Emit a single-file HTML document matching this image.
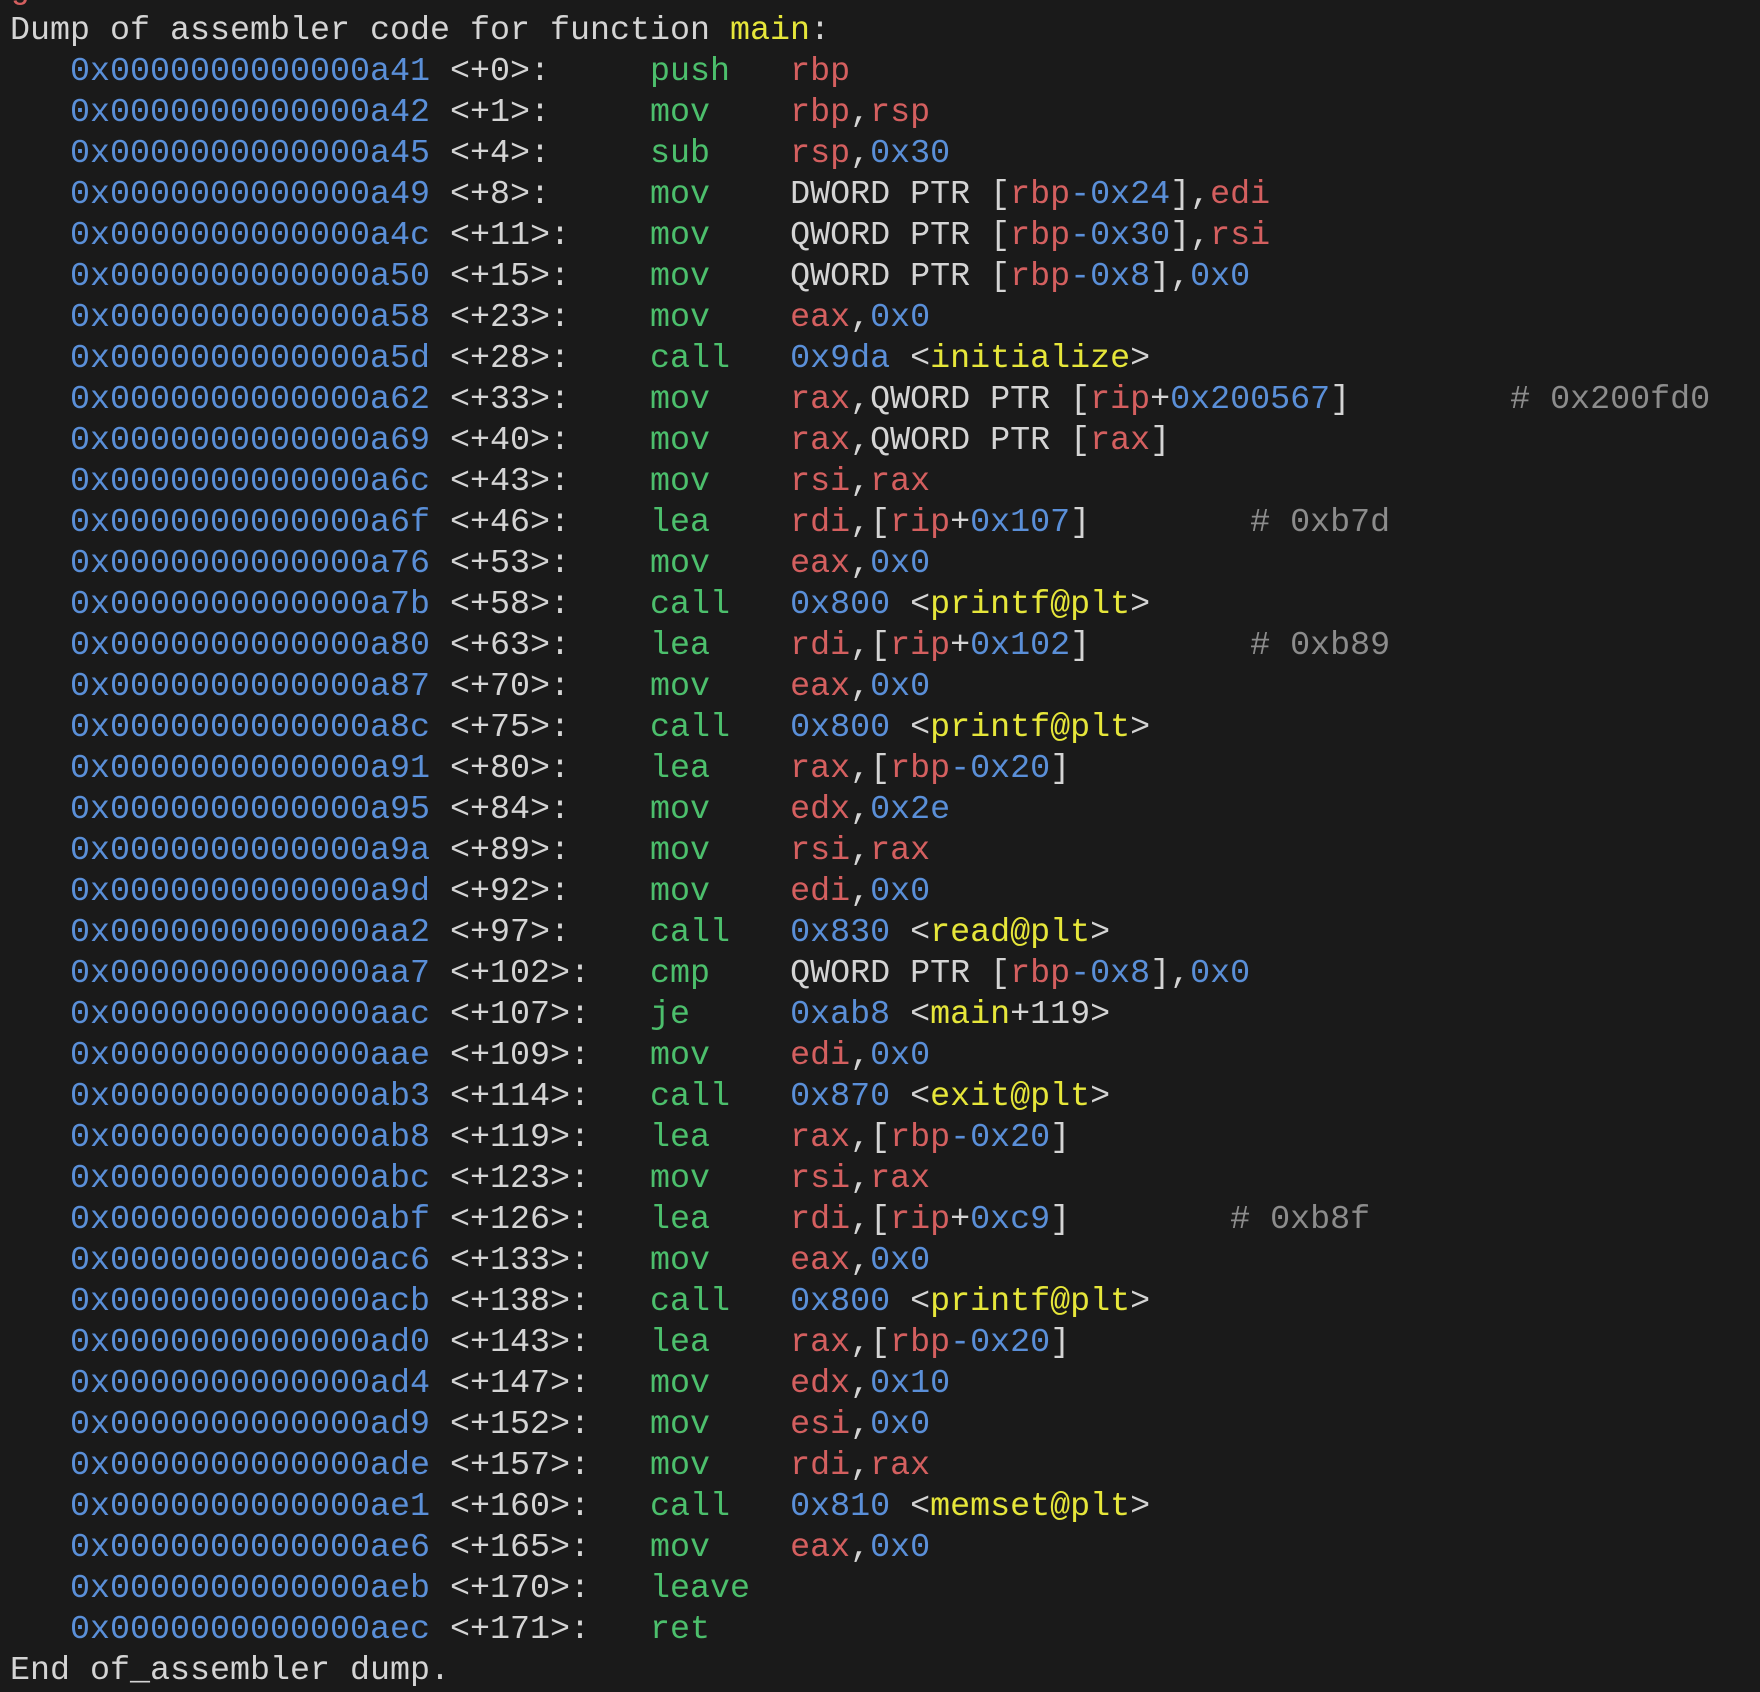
<!DOCTYPE html>
<html><head><meta charset="utf-8">
<style>
html,body{margin:0;padding:0;background:#1a1a1a;width:1760px;height:1692px;overflow:hidden}
pre{margin:0;position:absolute;left:10px;top:-30px;font-family:"Liberation Mono","DejaVu Sans Mono",monospace;font-size:33.33px;line-height:41px;color:#d4d4d4;white-space:pre}
.a{color:#5a8fd8}.g{color:#4cbf6c}.r{color:#d45f5f}.y{color:#e6e63a}.c{color:#8c8c8c}
</style></head><body>
<pre><span class="r">gef➤</span>  disass main
Dump of assembler code for function <span class="y">main</span>:
   <span class="a">0x0000000000000a41</span> &lt;+0&gt;:     <span class="g">push</span>   <span class="r">rbp</span>
   <span class="a">0x0000000000000a42</span> &lt;+1&gt;:     <span class="g">mov</span>    <span class="r">rbp</span>,<span class="r">rsp</span>
   <span class="a">0x0000000000000a45</span> &lt;+4&gt;:     <span class="g">sub</span>    <span class="r">rsp</span>,<span class="a">0x30</span>
   <span class="a">0x0000000000000a49</span> &lt;+8&gt;:     <span class="g">mov</span>    DWORD PTR [<span class="r">rbp</span><span class="a">-0x24</span>],<span class="r">edi</span>
   <span class="a">0x0000000000000a4c</span> &lt;+11&gt;:    <span class="g">mov</span>    QWORD PTR [<span class="r">rbp</span><span class="a">-0x30</span>],<span class="r">rsi</span>
   <span class="a">0x0000000000000a50</span> &lt;+15&gt;:    <span class="g">mov</span>    QWORD PTR [<span class="r">rbp</span><span class="a">-0x8</span>],<span class="a">0x0</span>
   <span class="a">0x0000000000000a58</span> &lt;+23&gt;:    <span class="g">mov</span>    <span class="r">eax</span>,<span class="a">0x0</span>
   <span class="a">0x0000000000000a5d</span> &lt;+28&gt;:    <span class="g">call</span>   <span class="a">0x9da</span> &lt;<span class="y">initialize</span>&gt;
   <span class="a">0x0000000000000a62</span> &lt;+33&gt;:    <span class="g">mov</span>    <span class="r">rax</span>,QWORD PTR [<span class="r">rip</span>+<span class="a">0x200567</span>]        <span class="c"># 0x200fd0</span>
   <span class="a">0x0000000000000a69</span> &lt;+40&gt;:    <span class="g">mov</span>    <span class="r">rax</span>,QWORD PTR [<span class="r">rax</span>]
   <span class="a">0x0000000000000a6c</span> &lt;+43&gt;:    <span class="g">mov</span>    <span class="r">rsi</span>,<span class="r">rax</span>
   <span class="a">0x0000000000000a6f</span> &lt;+46&gt;:    <span class="g">lea</span>    <span class="r">rdi</span>,[<span class="r">rip</span>+<span class="a">0x107</span>]        <span class="c"># 0xb7d</span>
   <span class="a">0x0000000000000a76</span> &lt;+53&gt;:    <span class="g">mov</span>    <span class="r">eax</span>,<span class="a">0x0</span>
   <span class="a">0x0000000000000a7b</span> &lt;+58&gt;:    <span class="g">call</span>   <span class="a">0x800</span> &lt;<span class="y">printf@plt</span>&gt;
   <span class="a">0x0000000000000a80</span> &lt;+63&gt;:    <span class="g">lea</span>    <span class="r">rdi</span>,[<span class="r">rip</span>+<span class="a">0x102</span>]        <span class="c"># 0xb89</span>
   <span class="a">0x0000000000000a87</span> &lt;+70&gt;:    <span class="g">mov</span>    <span class="r">eax</span>,<span class="a">0x0</span>
   <span class="a">0x0000000000000a8c</span> &lt;+75&gt;:    <span class="g">call</span>   <span class="a">0x800</span> &lt;<span class="y">printf@plt</span>&gt;
   <span class="a">0x0000000000000a91</span> &lt;+80&gt;:    <span class="g">lea</span>    <span class="r">rax</span>,[<span class="r">rbp</span><span class="a">-0x20</span>]
   <span class="a">0x0000000000000a95</span> &lt;+84&gt;:    <span class="g">mov</span>    <span class="r">edx</span>,<span class="a">0x2e</span>
   <span class="a">0x0000000000000a9a</span> &lt;+89&gt;:    <span class="g">mov</span>    <span class="r">rsi</span>,<span class="r">rax</span>
   <span class="a">0x0000000000000a9d</span> &lt;+92&gt;:    <span class="g">mov</span>    <span class="r">edi</span>,<span class="a">0x0</span>
   <span class="a">0x0000000000000aa2</span> &lt;+97&gt;:    <span class="g">call</span>   <span class="a">0x830</span> &lt;<span class="y">read@plt</span>&gt;
   <span class="a">0x0000000000000aa7</span> &lt;+102&gt;:   <span class="g">cmp</span>    QWORD PTR [<span class="r">rbp</span><span class="a">-0x8</span>],<span class="a">0x0</span>
   <span class="a">0x0000000000000aac</span> &lt;+107&gt;:   <span class="g">je</span>     <span class="a">0xab8</span> &lt;<span class="y">main</span>+119&gt;
   <span class="a">0x0000000000000aae</span> &lt;+109&gt;:   <span class="g">mov</span>    <span class="r">edi</span>,<span class="a">0x0</span>
   <span class="a">0x0000000000000ab3</span> &lt;+114&gt;:   <span class="g">call</span>   <span class="a">0x870</span> &lt;<span class="y">exit@plt</span>&gt;
   <span class="a">0x0000000000000ab8</span> &lt;+119&gt;:   <span class="g">lea</span>    <span class="r">rax</span>,[<span class="r">rbp</span><span class="a">-0x20</span>]
   <span class="a">0x0000000000000abc</span> &lt;+123&gt;:   <span class="g">mov</span>    <span class="r">rsi</span>,<span class="r">rax</span>
   <span class="a">0x0000000000000abf</span> &lt;+126&gt;:   <span class="g">lea</span>    <span class="r">rdi</span>,[<span class="r">rip</span>+<span class="a">0xc9</span>]        <span class="c"># 0xb8f</span>
   <span class="a">0x0000000000000ac6</span> &lt;+133&gt;:   <span class="g">mov</span>    <span class="r">eax</span>,<span class="a">0x0</span>
   <span class="a">0x0000000000000acb</span> &lt;+138&gt;:   <span class="g">call</span>   <span class="a">0x800</span> &lt;<span class="y">printf@plt</span>&gt;
   <span class="a">0x0000000000000ad0</span> &lt;+143&gt;:   <span class="g">lea</span>    <span class="r">rax</span>,[<span class="r">rbp</span><span class="a">-0x20</span>]
   <span class="a">0x0000000000000ad4</span> &lt;+147&gt;:   <span class="g">mov</span>    <span class="r">edx</span>,<span class="a">0x10</span>
   <span class="a">0x0000000000000ad9</span> &lt;+152&gt;:   <span class="g">mov</span>    <span class="r">esi</span>,<span class="a">0x0</span>
   <span class="a">0x0000000000000ade</span> &lt;+157&gt;:   <span class="g">mov</span>    <span class="r">rdi</span>,<span class="r">rax</span>
   <span class="a">0x0000000000000ae1</span> &lt;+160&gt;:   <span class="g">call</span>   <span class="a">0x810</span> &lt;<span class="y">memset@plt</span>&gt;
   <span class="a">0x0000000000000ae6</span> &lt;+165&gt;:   <span class="g">mov</span>    <span class="r">eax</span>,<span class="a">0x0</span>
   <span class="a">0x0000000000000aeb</span> &lt;+170&gt;:   <span class="g">leave</span>
   <span class="a">0x0000000000000aec</span> &lt;+171&gt;:   <span class="g">ret</span>
End of_assembler dump.</pre>
</body></html>
